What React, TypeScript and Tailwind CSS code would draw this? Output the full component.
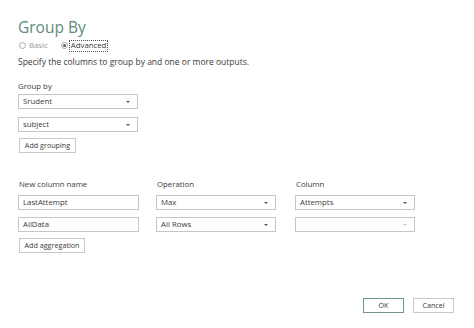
import React from "react";

const font = { fontFamily: '"Open Sans", "Noto Sans", sans-serif' };

function Arrow({ light }: { light?: boolean }) {
  return (
    <svg width="4" height="2" viewBox="0 0 4 2" className="shrink-0">
      <path d="M0 0 L4 0 L2 2 Z" fill={light ? "#c8c8c8" : "#555"} />
    </svg>
  );
}

function Select({ value, disabled }: { value?: string; disabled?: boolean }) {
  return (
    <div className="flex h-[15px] w-[120px] items-center justify-between border border-[#c6c6c6] bg-white pl-[4px] pr-[7px] text-[7.8px] leading-none text-[#3a3a3a]">
      <span>{value ?? ""}</span>
      <Arrow light={disabled} />
    </div>
  );
}

function Input({ value }: { value: string }) {
  return (
    <div className="flex h-[15px] w-[121px] items-center border border-[#c6c6c6] bg-white pl-[4px] text-[7.8px] leading-none text-[#3a3a3a]">
      {value}
    </div>
  );
}

function Btn({ children, w, primary }: { children: React.ReactNode; w: string; primary?: boolean }) {
  return (
    <div
      className={`flex h-[15px] ${w} items-center justify-center border ${primary ? "border-[#6f968a]" : "border-[#c9c9c9]"} bg-white text-[7.2px] leading-none text-[#3a3a3a]`}
    >
      {children}
    </div>
  );
}

export default function App() {
  return (
    <div style={font} className="flex h-[328px] w-[474px] flex-col bg-white pl-[18px] text-[#3a3a3a]">
      <div className="mt-[17px] h-[20px] text-[15.5px] leading-[20px] text-[#5e8b7c]">Group By</div>
      <div className="mt-[3px] flex h-[12px] items-center text-[7.8px] leading-none">
        <div className="flex items-center pl-[1px] text-[#999]">
          <span className="inline-block h-[7px] w-[7px] rounded-full border border-[#aaa]" />
          <span className="ml-[3px]">Basic</span>
        </div>
        <div className="ml-[13px] flex items-center">
          <span className="flex h-[7px] w-[7px] items-center justify-center rounded-full border border-[#aaa]">
            <span className="h-[3px] w-[3px] rounded-full bg-[#555]" />
          </span>
          <span className="ml-[1px] border border-dotted border-[#555] px-[1px] py-[1px]">Advanced</span>
        </div>
      </div>
      <div className="mt-[4px] h-[12px] text-[8.5px] leading-[12px]">
        Specify the columns to group by and one or more outputs.
      </div>
      <div className="mt-[13px] h-[10px] text-[7.8px] leading-[10px]">Group by</div>
      <div className="mt-[3px] flex flex-col gap-[8px]">
        <Select value="Srudent" />
        <Select value="subject" />
      </div>
      <div className="mt-[6px] pl-[1px]">
        <Btn w="w-[57px]">Add grouping</Btn>
      </div>
      <div className="mt-[26px] grid grid-cols-[138px_139px_120px] pl-[1px] text-[7.8px] leading-[10px]">
        <div>New column name</div>
        <div>Operation</div>
        <div>Column</div>
      </div>
      <div className="mt-[6px] grid grid-cols-[138px_139px_120px] gap-y-[7px]">
        <Input value="LastAttempt" />
        <Select value="Max" />
        <Select value="Attempts" />
        <Input value="AllData" />
        <Select value="All Rows" />
        <Select disabled />
      </div>
      <div className="mt-[6px] pl-[1px]">
        <Btn w="w-[66px]">Add aggregation</Btn>
      </div>
      <div className="mt-[45px] flex justify-end gap-[9px] pr-[20px]">
        <Btn w="w-[41px]" primary>OK</Btn>
        <Btn w="w-[41px]">Cancel</Btn>
      </div>
    </div>
  );
}
